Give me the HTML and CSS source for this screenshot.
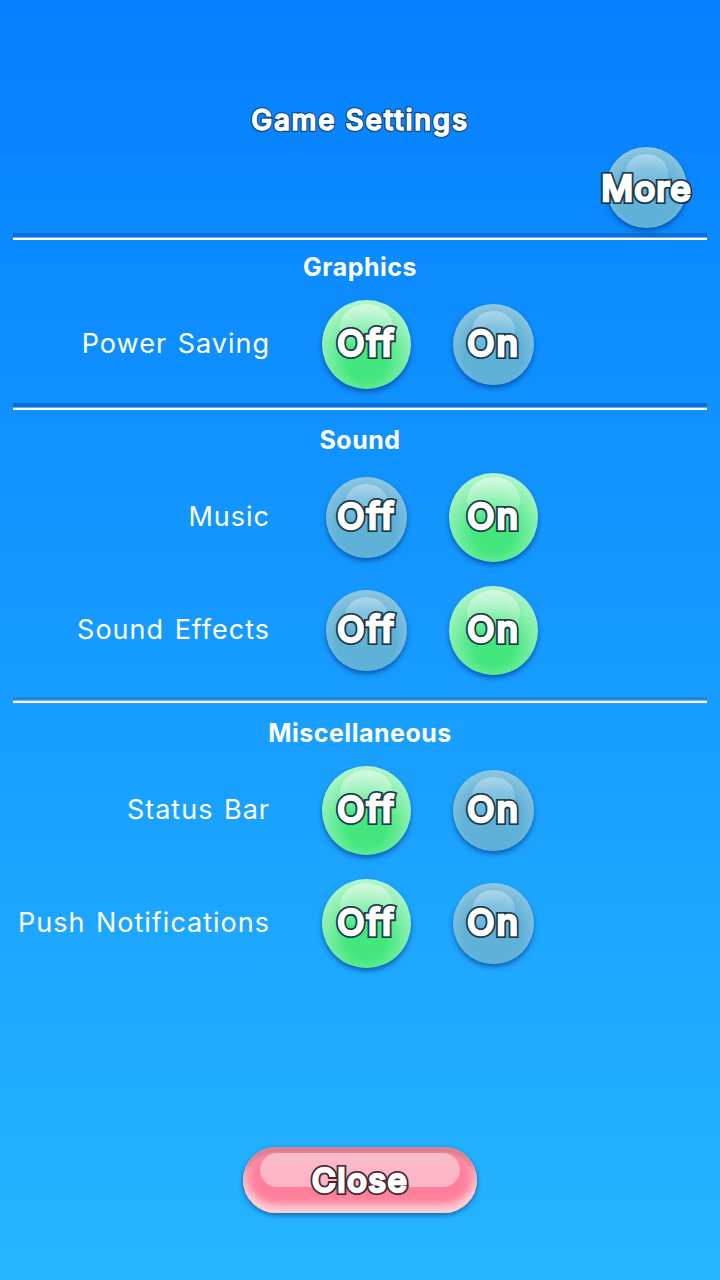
FILE: index.html
```html
<!DOCTYPE html>
<html>
  <head>
    <meta charset="utf-8">
    <title>Game Settings</title>
    <link rel="stylesheet" href="styles.css">
  </head>
  <body>
    <div class="page">
      <h1 class="title"><span class="face" data-label="Game Settings">Game Settings</span></h1>
      <div class="more-row">
        <button class="ball more"><span class="face" data-label="More">More</span></button>
      </div>
      <hr class="divider">
      <section class="group group-graphics">
        <h2>Graphics</h2>
        <div class="row">
          <span class="label">Power Saving</span>
          <div class="toggle"><button class="ball on"><span class="face" data-label="Off">Off</span></button></div>
          <div class="toggle"><button class="ball"><span class="face" data-label="On">On</span></button></div>
        </div>
      </section>
      <hr class="divider">
      <section class="group group-sound">
        <h2>Sound</h2>
        <div class="row">
          <span class="label">Music</span>
          <div class="toggle"><button class="ball"><span class="face" data-label="Off">Off</span></button></div>
          <div class="toggle"><button class="ball on"><span class="face" data-label="On">On</span></button></div>
        </div>
        <div class="row">
          <span class="label">Sound Effects</span>
          <div class="toggle"><button class="ball"><span class="face" data-label="Off">Off</span></button></div>
          <div class="toggle"><button class="ball on"><span class="face" data-label="On">On</span></button></div>
        </div>
      </section>
      <hr class="divider divider-thin">
      <section class="group group-misc">
        <h2>Miscellaneous</h2>
        <div class="row">
          <span class="label">Status Bar</span>
          <div class="toggle"><button class="ball on"><span class="face" data-label="Off">Off</span></button></div>
          <div class="toggle"><button class="ball"><span class="face" data-label="On">On</span></button></div>
        </div>
        <div class="row">
          <span class="label">Push Notifications</span>
          <div class="toggle"><button class="ball on"><span class="face" data-label="Off">Off</span></button></div>
          <div class="toggle"><button class="ball"><span class="face" data-label="On">On</span></button></div>
        </div>
      </section>
      <button class="close"><span class="face" data-label="Close">Close</span></button>
    </div>
  </body>
</html>
```

FILE: styles.css
```css
* { box-sizing: border-box; }
html, body {
  margin: 0;
  height: 100%;
}
body {
  font-family: "Inter", "Liberation Sans", sans-serif;
  color: #fff;
  background: linear-gradient(#0580ff, #26b5ff);
}
.page {
  height: 1280px;
  display: flex;
  flex-direction: column;
  padding-top: 103px;
}

/* white letters fattened by a stroke, dark outline copy sits behind them */
.face {
  position: relative;
  isolation: isolate;
  display: inline-block;
  white-space: nowrap;
  -webkit-text-stroke: 2.4px #fff;
  paint-order: stroke fill;
}
.face::before {
  content: attr(data-label);
  position: absolute;
  left: 0;
  top: 0;
  z-index: -1;
  -webkit-text-stroke: 6px #1d3a48;
  text-shadow: 0 1px 3px rgba(10, 50, 90, 0.6);
}

.title {
  margin: 0;
  height: 34px;
  line-height: 34px;
  font-size: 28px;
  font-weight: 500;
  text-align: center;
  letter-spacing: 1.75px;
}
.title .face { -webkit-text-stroke-width: 1.5px; }
.title .face::before {
  -webkit-text-stroke: 3.5px #0d3f78;
}
.more-row {
  display: flex;
  justify-content: flex-end;
  padding: 10px 33px 0 0;
  height: 96px;
}
.divider {
  margin: 0 13px;
  height: 7px;
  border: 0;
  flex: none;
  background: linear-gradient(#0a6fd6 0 4px, #5cb0ff 4px 5px, #fff 5px);
}
.divider-thin {
  height: 6px;
  background: linear-gradient(#1f86dc 0 3px, #6cc0ff 3px 4px, #fff 4px);
}
.group {
  display: flex;
  flex-direction: column;
  gap: 25px;
}
.group h2 {
  margin: 0 0 -7px;
  height: 30px;
  line-height: 30px;
  font-size: 25px;
  font-weight: 700;
  letter-spacing: 0.5px;
  text-align: center;
}
.group-graphics { padding: 12px 0 15px; }
.group-sound { padding: 15px 0 23px; }
.group-misc { padding: 15px 0 0; }
.row {
  display: flex;
  align-items: center;
  height: 88px;
}
.label {
  width: 270px;
  margin-top: -2px;
  text-align: right;
  font-size: 27px;
  letter-spacing: 1px;
  word-spacing: 2px;
}
.toggle {
  width: 89px;
  height: 88px;
  display: flex;
  align-items: center;
  justify-content: center;
  margin-left: 52px;
}
.toggle + .toggle { margin-left: 38px; }
.ball, .close {
  position: relative;
  display: flex;
  align-items: center;
  justify-content: center;
  padding: 0 0 3px;
  border: 0;
  color: #fff;
  font-family: "Inter", "Liberation Sans", sans-serif;
  font-weight: 500;
}
.ball {
  flex: none;
  width: 81px;
  height: 81px;
  border-radius: 50%;
  font-size: 36px;
  letter-spacing: 1.8px;
  background: radial-gradient(circle at 50% 62%, #5fb1d8 0 45%, #80c0dc 68%, #b4dcec 100%);
  box-shadow: 0 3px 5px rgba(0, 40, 110, 0.55);
}
.ball::before {
  content: "";
  position: absolute;
  left: 19px;
  top: 7px;
  width: 43px;
  height: 40px;
  border-radius: 50%;
  background: linear-gradient(rgba(255, 255, 255, 0.36), rgba(255, 255, 255, 0.02));
}
.ball.on {
  width: 89px;
  height: 89px;
  background: radial-gradient(circle at 50% 68%, #43e77e 0 26%, #7ceea5 52%, #dafbe6 100%);
}
.ball.on::before {
  left: 18px;
  top: 4px;
  width: 53px;
  height: 46px;
  background: linear-gradient(rgba(255, 255, 255, 0.5), rgba(255, 255, 255, 0.02));
}
.more {
  padding: 0;
  font-size: 35px;
  letter-spacing: 1px;
}
.close {
  align-self: center;
  width: 234px;
  height: 66px;
  margin: auto 0 67px;
  padding: 0;
  border-radius: 33px;
  font-size: 33px;
  letter-spacing: 1.4px;
  background: #ff7f9b;
  box-shadow:
    inset 0 -8px 9px #fcd3da,
    inset 0 6px 3px #d9808f,
    inset 5px 0 9px #ffa9ba,
    inset -5px 0 9px #ffa9ba,
    0 2px 5px rgba(0, 50, 110, 0.6);
}
.close::before {
  content: "";
  position: absolute;
  left: 17px;
  top: 6px;
  width: 200px;
  height: 34px;
  border-radius: 17px;
  background: linear-gradient(#f8bccb, #ffb2c6);
}
.close .face::before {
  -webkit-text-stroke-color: #4a2730;
}
```
